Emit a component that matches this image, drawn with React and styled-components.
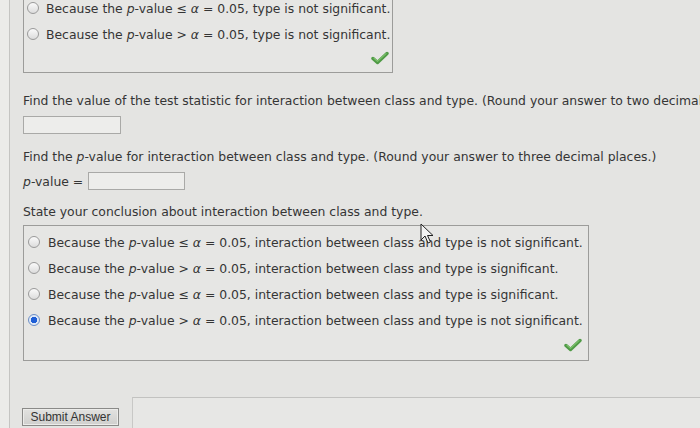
import React from 'react'
import styled, { createGlobalStyle } from 'styled-components'

const Global = createGlobalStyle`
  html, body {
    margin: 0;
    padding: 0;
    background: #ebebe9;
    overflow: hidden;
  }
  body {
    font-family: "DejaVu Sans", Verdana, sans-serif;
    color: #353535;
  }
`;

const Page = styled.div`
  position: relative;
  width: 691px;
  height: 438px;
  margin-top: -10px;
  margin-left: 9px;
  border-left: 1px solid #c4c4c2;
  background: #e4e4e2;
  padding-left: 13px;
  box-sizing: border-box;
  overflow: hidden;
`;

const Box = styled.div`
  width: ${props => props.width}px;
  border: 1px solid #9c9c9a;
  padding: ${props => props.pt}px ${props => props.pr}px 3px ${props => props.pl}px;
  box-sizing: border-box;
  background: #e6e6e4;
  margin-top: ${props => props.mt || 0}px;
`;

const Option = styled.div`
  display: flex;
  align-items: center;
  height: 26px;
  font-size: 12.4px;
  white-space: nowrap;
  gap: ${props => props.gap}px;
`;

const Radio = styled.span`
  width: 12px;
  height: 12px;
  border-radius: 50%;
  box-sizing: border-box;
  border: 1px solid ${props => props.checked ? '#6d8fc6' : '#9a9a9a'};
  background: ${props => props.checked
    ? 'radial-gradient(circle, #1f5fd6 0 3px, #dfe8f6 3.5px)'
    : 'linear-gradient(#fafafa, #dcdcdc)'};
  flex-shrink: 0;
`;

const CheckRow = styled.div`
  display: flex;
  justify-content: flex-end;
  align-items: center;
  height: ${props => props.h}px;
`;

const Prompt = styled.div`
  font-size: 12.4px;
  line-height: 18px;
  white-space: nowrap;
  margin-top: ${props => props.mt}px;
`;

const AnswerInput = styled.div`
  width: ${props => props.width}px;
  height: 18px;
  box-sizing: border-box;
  border: 1px solid #a9a9a7;
  background: #ededeb;
  margin-top: ${props => props.mt || 0}px;
`;

const InlineRow = styled.div`
  display: flex;
  align-items: center;
  gap: 5px;
  margin-top: 6px;
  font-size: 12.4px;
  height: 18px;
`;

const Bottom = styled.div`
  display: flex;
  align-items: flex-start;
  margin-top: 36px;
  margin-left: -1px;
`;

const SubmitButton = styled.button`
  margin-top: 11px;
  width: 97px;
  height: 18px;
  padding: 0;
  font-family: "Liberation Sans", Arial, sans-serif;
  font-size: 12px;
  color: #333;
  background: linear-gradient(#e2e2e0, #cfcfcd);
  border: 1px solid #8a8a88;
  box-shadow: inset 0 0 0 1px #ececea;
`;

const Panel = styled.div`
  flex: 1;
  height: 60px;
  margin-left: 13px;
  border-top: 1px solid #c2c2c0;
  border-left: 1px solid #c8c8c6;
  background: #e7e7e5;
`;

const Cursor = styled.svg`
  position: absolute;
  left: ${props => props.x}px;
  top: ${props => props.y}px;
`;

const I = styled.i`
  font-family: "DejaVu Sans", sans-serif;
  font-style: italic;
`;

const Check = () => (
  <svg width="18" height="14" viewBox="0 0 18 14">
    <path d="M2 7.5 L6.5 11.5 L16 2.5" fill="none" stroke="#4f9a45" strokeWidth="3.4" strokeLinecap="round" strokeLinejoin="round" />
    <path d="M3 7.2 L6.5 10.3 L15 2.6" fill="none" stroke="#7cc06c" strokeWidth="1.2" strokeLinecap="round" strokeLinejoin="round" />
  </svg>
);

const PV = ({ op }) => (
  <span>Because the <I>p</I>-value {op} <I>α</I> = 0.05, </span>
);

const topOptions = [
  { op: '≤', text: 'type is not significant.' },
  { op: '>', text: 'type is not significant.' },
];

const conclusionOptions = [
  { op: '≤', text: 'interaction between class and type is not significant.' },
  { op: '>', text: 'interaction between class and type is significant.' },
  { op: '≤', text: 'interaction between class and type is significant.' },
  { op: '>', text: 'interaction between class and type is not significant.', checked: true },
];

const App = () => (
  <>
    <Global />
    <Page>
      <Box width={370} pt={4} pl={3} pr={3}>
        {topOptions.map((o, i) => (
          <Option key={i} gap={7}>
            <Radio />
            <span><PV op={o.op} />{o.text}</span>
          </Option>
        ))}
        <CheckRow h={22}><Check /></CheckRow>
      </Box>

      <Prompt mt={19}>
        Find the value of the test statistic for interaction between class and type. (Round your answer to two decimal places.)
      </Prompt>
      <AnswerInput width={98} mt={6} />

      <Prompt mt={14}>
        Find the <I>p</I>-value for interaction between class and type. (Round your answer to three decimal places.)
      </Prompt>
      <InlineRow>
        <span><I>p</I>-value =</span>
        <AnswerInput width={97} />
      </InlineRow>

      <Prompt mt={13}>State your conclusion about interaction between class and type.</Prompt>
      <Box width={566} pt={3} pl={4} pr={6} mt={4}>
        {conclusionOptions.map((o, i) => (
          <Option key={i} gap={8}>
            <Radio checked={o.checked} />
            <span><PV op={o.op} />{o.text}</span>
          </Option>
        ))}
        <CheckRow h={24}><Check /></CheckRow>
      </Box>

      <Bottom>
        <SubmitButton>Submit Answer</SubmitButton>
        <Panel />
      </Bottom>

      <Cursor x={410} y={233} width="16" height="22" viewBox="0 0 16 22">
        <path d="M1 1 L1 17 L5 13 L8 20 L10.5 19 L7.5 12.5 L13 12.5 Z" fill="#f2f2f2" stroke="#222" strokeWidth="1" strokeLinejoin="round" />
      </Cursor>
    </Page>
  </>
);

export default App
